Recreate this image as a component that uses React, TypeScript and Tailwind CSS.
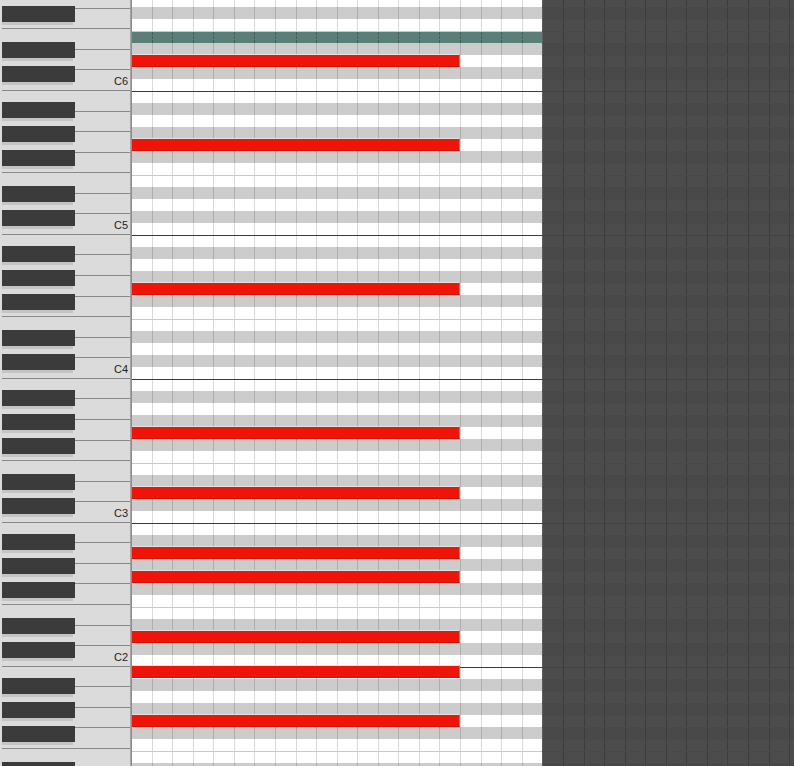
import React from 'react';

const TOP_PITCH = 91; // G6
const ROW_COUNT = 65;
const BLACK = [1, 3, 6, 8, 10];
const NOTES = new Set([86, 79, 67, 55, 50, 45, 43, 38, 35, 31]);
const HIGHLIGHT = 88;

const pitches = Array.from({ length: ROW_COUNT }, (_, i) => TOP_PITCH - i);

const WHITE_SEQ = ['G', 'F', 'E', 'D', 'C', 'B', 'A'];
const whiteKeys: { name: string; octave: number }[] = [];
{
  let octave = 6;
  for (let i = 0; i < 38; i++) {
    const name = WHITE_SEQ[i % 7];
    whiteKeys.push({ name, octave });
    if (name === 'C') octave -= 1;
  }
}

function WhiteKey({ name, octave }: { name: string; octave: number }) {
  const full = name === 'C' || name === 'F';
  return (
    <div className="h-[20.5714px] shrink-0 flex flex-col">
      <div className="flex-1 flex items-end justify-end pr-[2px] pb-[3px]">
        {name === 'C' && (
          <span className="text-[11px] leading-[11px] text-[#1e1e1e]">C{octave}</span>
        )}
      </div>
      <div className={full ? 'h-px bg-[#888888]' : 'h-px bg-[#888888] ml-[73px]'} />
    </div>
  );
}

function KeyRow({ p }: { p: number }) {
  const black = BLACK.includes(p % 12);
  return (
    <div className="h-[12px] shrink-0">
      {black && (
        <div className="relative -top-px">
          <div className="ml-[2px] w-[73px] h-[16px] bg-[#3a3b3a]" />
          <div className="ml-[2px] w-[71px] h-[3px] bg-[#c4c4c4]" />
        </div>
      )}
    </div>
  );
}

function Keyboard() {
  return (
    <div className="relative w-[130px] shrink-0 h-full overflow-hidden bg-[#dbdbdb] pl-[2px]">
      <div className="flex flex-col mt-[-11.857px]">
        {whiteKeys.map((k, i) => (
          <WhiteKey key={i} name={k.name} octave={k.octave} />
        ))}
      </div>
      <div className="absolute inset-0 flex flex-col mt-[-5px]">
        {pitches.map((p) => (
          <KeyRow key={p} p={p} />
        ))}
      </div>
    </div>
  );
}

function RollRow({ p }: { p: number }) {
  const pc = p % 12;
  const black = BLACK.includes(pc);
  const isB = pc === 11;
  const isE = pc === 4;
  const hl = p === HIGHLIGHT;

  const lightBg = hl ? 'bg-[#5a7f78]' : black ? 'bg-[#cccccc]' : 'bg-white';
  const lightBorder = isB
    ? 'border-t border-t-[#3a3a3a]'
    : isE
    ? 'border-t border-t-[#c9c9c9]'
    : '';
  const darkBg = black ? 'bg-[#494949]' : 'bg-[#4c4c4c]';
  const darkBorder = isB ? 'border-t border-t-[#424242]' : 'border-t border-t-[#484848]';
  const cellLine = hl
    ? 'w-[20.5714px] shrink-0 border-l border-dashed border-l-black/25'
    : 'w-[20.5714px] shrink-0 border-l border-l-black/15';

  return (
    <div className="relative h-[12px] shrink-0 flex">
      <div className={`flex w-[410.4286px] shrink-0 ${lightBg} ${lightBorder}`}>
        <div className="w-[19.5714px] shrink-0" />
        {Array.from({ length: 19 }, (_, i) => (
          <div key={i} className={cellLine} />
        ))}
      </div>
      <div className={`flex flex-1 ${darkBg} ${darkBorder}`}>
        <div className="w-[20.5714px] shrink-0 border-l border-l-[#5e5e5e]" />
        {Array.from({ length: 12 }, (_, i) => (
          <div key={i} className="w-[20.5714px] shrink-0 border-l border-l-[#3c3c3c]" />
        ))}
      </div>
      {NOTES.has(p) && (
        <div
          className={`absolute left-0 z-10 w-[328px] h-[13px] bg-[#f01408] border-t border-t-[#e2e2e2] border-r border-r-[#8c8c8c] border-b border-b-[#cf1208] ${
            isB ? 'top-[-2px]' : 'top-[-1px]'
          }`}
        />
      )}
    </div>
  );
}

export default function App() {
  return (
    <div className="w-[794px] h-[766px] overflow-hidden flex bg-[#4a4a4a] font-['Liberation_Sans',Arial,sans-serif]">
      <Keyboard />
      <div className="w-px shrink-0 h-full bg-[#a3a3a3]" />
      <div className="w-px shrink-0 h-full bg-[#5aa596]" />
      <div className="flex-1 h-full overflow-hidden">
        <div className="flex flex-col mt-[-5px]">
          {pitches.map((p) => (
            <RollRow key={p} p={p} />
          ))}
        </div>
      </div>
    </div>
  );
}
